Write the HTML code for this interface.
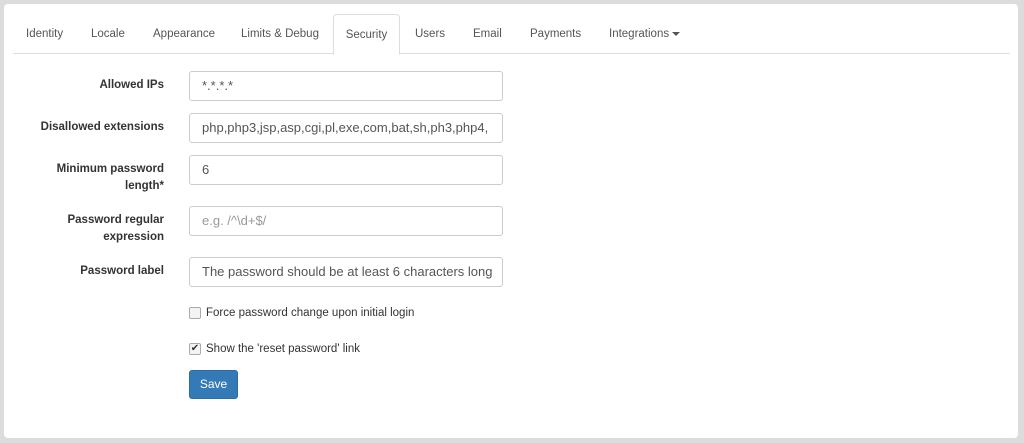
<!DOCTYPE html>
<html><head><style>
body{margin:0;background:#dcdcdc;font-family:"Liberation Sans",sans-serif;font-size:12px;color:#333;}
.panel{position:absolute;left:4px;top:4px;width:1014px;height:434px;background:#fff;border-radius:4px;}
.tabs{position:absolute;left:13px;top:14px;width:997px;height:39px;border-bottom:1px solid #ddd;}
.tab{position:absolute;top:1px;height:39px;line-height:39px;color:#555;font-size:11.5px;}
.tab.active{top:0;border:1px solid #ddd;border-bottom:1px solid #fff;border-radius:4px 4px 0 0;background:#fff;height:39px;line-height:40px;}
.lbl{position:absolute;width:140px;text-align:right;font-weight:bold;font-size:11.5px;line-height:17px;color:#333;}
.inp{position:absolute;left:189px;width:300px;height:28px;border:1px solid #ccc;border-radius:3px;padding-left:12px;line-height:28px;font-size:13px;color:#555;white-space:nowrap;overflow:hidden;box-sizing:content-box;}
.cb{position:absolute;left:189px;width:10px;height:10px;border:1px solid #aaa;border-radius:2px;background:#f4f4f4;}
.cbl{position:absolute;left:206px;font-size:11.5px;color:#333;}
.btn{position:absolute;left:189px;top:370px;width:49px;height:29px;background:#337ab7;border:1px solid #2e6da4;box-sizing:border-box;border-radius:3px;color:#fff;text-align:center;line-height:27px;font-size:12px;}
</style></head><body>
<div class="panel"></div>
<div class="tabs">
<div class="tab" style="left:13px">Identity</div>
<div class="tab" style="left:78px">Locale</div>
<div class="tab" style="left:140px">Appearance</div>
<div class="tab" style="left:228px">Limits &amp; Debug</div>
<div class="tab active" style="left:320px;width:65px;text-align:center">Security</div>
<div class="tab" style="left:402px">Users</div>
<div class="tab" style="left:460px">Email</div>
<div class="tab" style="left:517px">Payments</div>
<div class="tab" style="left:596px">Integrations <span style="display:inline-block;border-left:4px solid transparent;border-right:4px solid transparent;border-top:4px solid #555;vertical-align:middle"></span></div>
</div>
<div class="lbl" style="top:77px;left:24px">Allowed IPs</div>
<div class="inp" style="top:71px">*.*.*.*</div>
<div class="lbl" style="top:119px;left:24px">Disallowed extensions</div>
<div class="inp" style="top:113px">php,php3,jsp,asp,cgi,pl,exe,com,bat,sh,ph3,php4,</div>
<div class="lbl" style="top:161px;left:24px">Minimum password<br>length*</div>
<div class="inp" style="top:155px">6</div>
<div class="lbl" style="top:212px;left:24px">Password regular<br>expression</div>
<div class="inp" style="top:206px;color:#999">e.g. /^\d+$/</div>
<div class="lbl" style="top:263px;left:24px">Password label</div>
<div class="inp" style="top:257px">The password should be at least 6 characters long</div>
<div class="cb" style="top:307px"></div>
<div class="cbl" style="top:307px">Force password change upon initial login</div>
<div class="cb" style="top:343px;font-size:10px;line-height:10px;text-align:center;color:#333">✔</div>
<div class="cbl" style="top:343px">Show the 'reset password' link</div>
<div class="btn">Save</div>
</body></html>
